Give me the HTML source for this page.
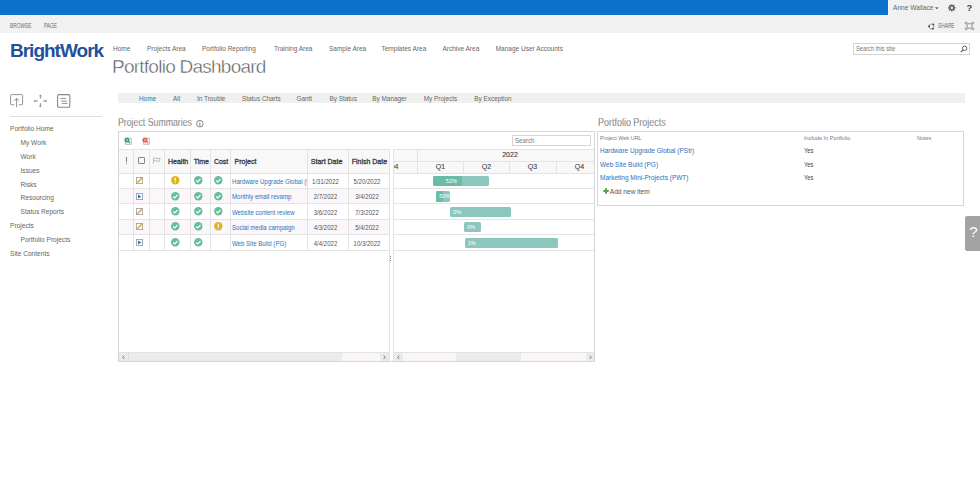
<!DOCTYPE html><html><head><meta charset="utf-8"><style>
html,body{margin:0;padding:0;width:980px;height:478px;overflow:hidden;background:#fff;font-family:"Liberation Sans",sans-serif;color:#444}
.a{position:absolute;white-space:nowrap}
.rt{font-size:6.5px;color:#6a6a6a;line-height:8px;transform:scaleX(0.74);transform-origin:0 0}
.nav{font-size:6.5px;color:#666;top:44.1px;line-height:10px}
.ln{font-size:6.6px;color:#666;line-height:10px}
.tab{font-size:6.4px;color:#666;top:93.7px;line-height:10px}
.vl{position:absolute;width:1px;background:#e3e3e3}
.hl{position:absolute;height:1px;background:#e3e3e3}
.hd{font-size:7px;font-weight:normal;-webkit-text-stroke:0.3px #3a3a3a;color:#3a3a3a;line-height:10px}
.cell{font-size:6.6px;line-height:10px;color:#555}
.sx{transform:scaleX(0.92);transform-origin:0 0}
.lnk{color:#2b72bb}
.gh{-webkit-text-stroke:0.12px #444;color:#444}
svg{position:absolute;overflow:visible}
</style></head><body>
<div class="a" style="left:0;top:0;width:888px;height:15px;background:#0a72ca"></div>
<div class="a" style="left:0;top:15px;width:980px;height:18px;background:#f2f1f2"></div>
<div class="a" style="left:888px;top:0;width:92px;height:15px;background:#f2f1f2"></div>
<div class="a rt" style="left:10px;top:21.5px">BROWSE</div>
<div class="a rt" style="left:44px;top:21.5px">PAGE</div>
<div class="a" id="anne" style="left:893px;top:2.5px;font-size:6.6px;line-height:10px;color:#666">Anne Wallace</div>
<svg style="left:935px;top:7px" width="4" height="3"><path d="M0 0.3H3.6L1.8 2.4Z" fill="#666"/></svg>
<svg style="left:947.6px;top:3.6px" width="8" height="8" viewBox="0 0 8 8"><path fill="#555" fill-rule="evenodd" d="M6.49 3.30L7.60 3.23L7.60 4.47L6.49 4.40L6.11 5.33L6.94 6.06L6.06 6.94L5.33 6.11L4.40 6.49L4.47 7.60L3.23 7.60L3.30 6.49L2.37 6.11L1.64 6.94L0.76 6.06L1.59 5.33L1.21 4.40L0.10 4.47L0.10 3.23L1.21 3.30L1.59 2.37L0.76 1.64L1.64 0.76L2.37 1.59L3.30 1.21L3.23 0.10L4.47 0.10L4.40 1.21L5.33 1.59L6.06 0.76L6.94 1.64L6.11 2.37ZM3.85 2.55a1.3 1.3 0 1 0 .001 0z"/></svg>
<div class="a" style="left:966.5px;top:2.4px;font-size:9.5px;font-weight:bold;line-height:12px;color:#444">?</div>
<svg style="left:927.9px;top:22.9px" width="7" height="7" viewBox="0 0 7 7"><circle cx="3.5" cy="3.5" r="2.5" fill="none" stroke="#8a8a8a" stroke-width="0.8"/><circle cx="1.0" cy="3.2" r="1.0" fill="#555"/><circle cx="5.3" cy="1.5" r="1.0" fill="#555"/><circle cx="4.9" cy="5.8" r="1.0" fill="#555"/></svg>
<div class="a rt" id="share" style="left:938px;top:21.5px">SHARE</div>
<svg style="left:965px;top:21.7px" width="9" height="8" viewBox="0 0 9 8"><rect x="2" y="1.8" width="5" height="4.4" fill="none" stroke="#777" stroke-width="0.8"/><path d="M0.4 2.2V0.4H2.2M6.8 0.4H8.6V2.2M8.6 5.8V7.6H6.8M2.2 7.6H0.4V5.8" fill="none" stroke="#777" stroke-width="0.8"/></svg>
<div class="a" id="logo" style="left:10px;top:39.9px;font-size:19px;font-weight:bold;color:#24509a;letter-spacing:-1px;line-height:22px">BrightWork</div>
<div class="a nav" style="left:113px">Home</div>
<div class="a nav" style="left:147px">Projects Area</div>
<div class="a nav" style="left:202px">Portfolio Reporting</div>
<div class="a nav" style="left:274px">Training Area</div>
<div class="a nav" style="left:329px">Sample Area</div>
<div class="a nav" style="left:381.5px">Templates Area</div>
<div class="a nav" style="left:442.4px">Archive Area</div>
<div class="a nav" style="left:495.7px">Manage User Accounts</div>
<div class="a" id="title" style="left:112px;top:56px;font-size:19px;letter-spacing:-0.75px;line-height:22px;color:#555;-webkit-text-stroke:0.45px #fff">Portfolio Dashboard</div>
<div class="a" style="left:853px;top:43px;width:117px;height:12px;box-sizing:border-box;border:1px solid #d4d4d4;background:#fff"></div>
<div class="a" id="sts" style="left:856px;top:44.3px;font-size:6.5px;line-height:10px;color:#777;transform:scaleX(0.88);transform-origin:0 0">Search this site</div>
<svg style="left:960px;top:45px" width="8" height="8" viewBox="0 0 8 8"><circle cx="4.6" cy="3.3" r="2.2" fill="none" stroke="#555" stroke-width="0.9"/><path d="M3 4.9L0.8 7.1" stroke="#555" stroke-width="1.1"/></svg>
<svg style="left:10px;top:94px" width="14" height="14" viewBox="0 0 14 14"><path d="M4.3 10.8H1.4a.8.8 0 0 1-.8-.8V1.4a.8.8 0 0 1 .8-.8h10.4a.8.8 0 0 1 .8.8V10a.8.8 0 0 1-.8.8H8.8" fill="none" stroke="#888" stroke-width="0.9"/><path d="M6.6 13.2V4.4M4.2 6.8L6.6 4.3 9 6.8" fill="none" stroke="#888" stroke-width="0.9"/></svg>
<svg style="left:33px;top:94px" width="15" height="15" viewBox="0 0 15 15"><g fill="#888"><path d="M7.4 0.4L5.9 2.2H8.9Z"/><path d="M7.4 13.4L5.9 11.6H8.9Z"/><path d="M0.6 7L2.4 5.5V8.5Z"/><path d="M14.2 7L12.4 5.5V8.5Z"/></g><path d="M7.4 2V4.6M7.4 9.2V11.8M2.2 7H4.8M10 7H12.6" stroke="#888" stroke-width="0.9"/></svg>
<svg style="left:57px;top:94px" width="14" height="14" viewBox="0 0 14 14"><rect x="0.6" y="0.6" width="12.2" height="12.6" rx="1" fill="none" stroke="#888" stroke-width="1.1"/><path d="M3.2 4.4H9M4 7.1H10M4.8 9.4H10.6" stroke="#888" stroke-width="0.9"/></svg>
<div class="a" style="left:10px;top:116px;width:92px;height:1px;background:#e0e0e0"></div>
<div class="a ln" style="left:10px;top:124.3px">Portfolio Home</div>
<div class="a ln" style="left:20.5px;top:138.2px">My Work</div>
<div class="a ln" style="left:20.5px;top:152.1px">Work</div>
<div class="a ln" style="left:20.5px;top:165.8px">Issues</div>
<div class="a ln" style="left:20.5px;top:179.6px">Risks</div>
<div class="a ln" style="left:20.5px;top:193.4px">Resourcing</div>
<div class="a ln" style="left:20.5px;top:207.3px">Status Reports</div>
<div class="a ln" style="left:10px;top:221.1px">Projects</div>
<div class="a ln" style="left:20.5px;top:235px">Portfolio Projects</div>
<div class="a ln" style="left:10px;top:248.6px">Site Contents</div>
<div class="a" style="left:118px;top:93px;width:847px;height:10px;background:#f0f0f0"></div>
<div class="a tab lnk" style="left:139px">Home</div>
<div class="a tab" style="left:173px">All</div>
<div class="a tab" style="left:197px">In Trouble</div>
<div class="a tab" style="left:242px">Status Charts</div>
<div class="a tab" style="left:296.5px">Gantt</div>
<div class="a tab" style="left:329.5px">By Status</div>
<div class="a tab" style="left:372.3px">By Manager</div>
<div class="a tab" style="left:423.8px">My Projects</div>
<div class="a tab" style="left:474.3px">By Exception</div>
<div class="a" id="ps" style="left:118px;top:116px;font-size:10.3px;line-height:14px;color:#444;-webkit-text-stroke:0.25px #fff;transform:scaleX(0.85);transform-origin:0 0">Project Summaries</div>
<svg style="left:196px;top:120px" width="8" height="8" viewBox="0 0 8 8"><circle cx="3.9" cy="3.7" r="3.3" fill="none" stroke="#666" stroke-width="0.8"/><path d="M3.9 3V5.8" stroke="#666" stroke-width="0.9"/><circle cx="3.9" cy="1.9" r="0.5" fill="#666"/></svg>
<div class="a" id="pp" style="left:597.5px;top:115.8px;font-size:10.3px;line-height:14px;color:#444;-webkit-text-stroke:0.25px #fff;transform:scaleX(0.87);transform-origin:0 0">Portfolio Projects</div>
<div class="a" style="left:118px;top:131px;width:477px;height:231px;box-sizing:border-box;border:1px solid #d6d6d6"></div>
<svg style="left:124px;top:136.6px" width="9" height="9" viewBox="0 0 9 9"><path d="M5.2 1.1H7.3V7.3H1.4V5.2" fill="none" stroke="#a8a8a8" stroke-width="0.8"/><circle cx="3" cy="3" r="2.6" fill="#3a9a86"/><rect x="2.2" y="2.4" width="1.6" height="1.2" fill="#d8efe8"/><path d="M4.6 4.6L6.2 6.2" stroke="#3a9a86" stroke-width="1.1"/></svg>
<svg style="left:141.9px;top:136.6px" width="9" height="9" viewBox="0 0 9 9"><path d="M5.2 1.1H7.3V7.3H1.4V5.2" fill="none" stroke="#a8a8a8" stroke-width="0.8"/><circle cx="3" cy="3" r="2.6" fill="#e5604c"/><rect x="2.2" y="2.4" width="1.6" height="1.2" fill="#fde3dc"/><path d="M4.6 4.6L6.2 6.2" stroke="#e5604c" stroke-width="1.1"/></svg>
<div class="a" style="left:512px;top:135px;width:79px;height:11px;box-sizing:border-box;border:1px solid #d6d6d6"></div>
<div class="a" style="left:514.8px;top:136px;font-size:7px;line-height:10px;color:#777;transform:scaleX(0.88);transform-origin:0 0">Search</div>
<div class="a" style="left:119px;top:149px;width:270px;height:24px;background:#f9f8f9"></div>
<div class="a" style="left:394px;top:149px;width:200px;height:24px;background:#f9f8f9"></div>
<div class="a" style="left:119px;top:188px;width:270px;height:15px;background:#faf6fa"></div>
<div class="a" style="left:119px;top:219px;width:270px;height:15px;background:#faf6fa"></div>
<div class="hl" style="left:119px;top:149px;width:270px"></div>
<div class="hl" style="left:394px;top:149px;width:200px"></div>
<div class="hl" style="left:119px;top:173px;width:270px"></div>
<div class="hl" style="left:394px;top:173px;width:200px"></div>
<div class="hl" style="left:119px;top:188px;width:270px"></div>
<div class="hl" style="left:394px;top:188px;width:200px"></div>
<div class="hl" style="left:119px;top:203px;width:270px"></div>
<div class="hl" style="left:394px;top:203px;width:200px"></div>
<div class="hl" style="left:119px;top:219px;width:270px"></div>
<div class="hl" style="left:394px;top:219px;width:200px"></div>
<div class="hl" style="left:119px;top:234px;width:270px"></div>
<div class="hl" style="left:394px;top:234px;width:200px"></div>
<div class="hl" style="left:119px;top:250px;width:270px"></div>
<div class="hl" style="left:394px;top:250px;width:200px"></div>
<div class="hl" style="left:394px;top:161px;width:200px"></div>
<div class="vl" style="left:133px;top:149px;height:101px"></div>
<div class="vl" style="left:149px;top:149px;height:101px"></div>
<div class="vl" style="left:164px;top:149px;height:101px"></div>
<div class="vl" style="left:190px;top:149px;height:101px"></div>
<div class="vl" style="left:210px;top:149px;height:101px"></div>
<div class="vl" style="left:230px;top:149px;height:101px"></div>
<div class="vl" style="left:307px;top:149px;height:101px"></div>
<div class="vl" style="left:348px;top:149px;height:101px"></div>
<div class="vl" style="left:389px;top:149px;height:212px"></div>
<div class="vl" style="left:393px;top:149px;height:212px"></div>
<div class="a" style="left:390px;top:256px;width:1px;height:6px;background:repeating-linear-gradient(#888 0 1px,transparent 1px 2.2px)"></div>
<div class="vl" style="left:417px;top:149px;height:24px"></div>
<div class="vl" style="left:463px;top:161px;height:12px"></div>
<div class="vl" style="left:509px;top:161px;height:12px"></div>
<div class="vl" style="left:556px;top:161px;height:12px"></div>
<div class="hl" style="left:119px;top:352px;width:270px;background:#e2e2e2"></div>
<div class="hl" style="left:394px;top:352px;width:200px;background:#e2e2e2"></div>
<div class="a" style="left:119px;top:353px;width:270px;height:8px;background:#ebebeb"></div>
<div class="a" style="left:342px;top:353px;width:38px;height:8px;background:#f9f5f9"></div>
<div class="a" style="left:394px;top:353px;width:200px;height:8px;background:#ebebeb"></div>
<div class="a" style="left:403px;top:353px;width:53px;height:8px;background:#f9f5f9"></div>
<div class="a" style="left:521px;top:353px;width:65px;height:8px;background:#f9f5f9"></div>
<div class="vl" style="left:128px;top:353px;height:8px;background:#dcdcdc"></div>
<svg style="left:121.8px;top:354.5px" width="3" height="5" viewBox="0 0 3 5"><path d="M2.4 0.6L0.7 2.3 2.4 4" fill="none" stroke="#666" stroke-width="0.9"/></svg>
<svg style="left:383px;top:354.5px" width="3" height="5" viewBox="0 0 3 5"><path d="M0.6 0.6L2.3 2.3 0.6 4" fill="none" stroke="#666" stroke-width="0.9"/></svg>
<svg style="left:396.5px;top:354.5px" width="3" height="5" viewBox="0 0 3 5"><path d="M2.4 0.6L0.7 2.3 2.4 4" fill="none" stroke="#666" stroke-width="0.9"/></svg>
<svg style="left:588.5px;top:354.5px" width="3" height="5" viewBox="0 0 3 5"><path d="M0.6 0.6L2.3 2.3 0.6 4" fill="none" stroke="#666" stroke-width="0.9"/></svg>
<div class="a" style="left:125.5px;top:157px;width:1.4px;height:4.8px;background:#808080"></div>
<div class="a" style="left:125.5px;top:162.6px;width:1.4px;height:1.2px;background:#808080"></div>
<div class="a" style="left:138px;top:157px;width:7px;height:6.7px;box-sizing:border-box;border:1px solid #8a8a8a;border-radius:1px"></div>
<svg style="left:153px;top:157px" width="8" height="7" viewBox="0 0 8 7"><path d="M0.5 6.5V1.2Q2 0.4 3.6 1.2T6.8 1.2V4Q5.2 4.8 3.6 4T0.5 4" fill="none" stroke="#aaa" stroke-width="0.8"/></svg>
<div class="a hd" style="left:168px;top:156.5px">Health</div>
<div class="a hd" style="left:193.7px;top:156.5px">Time</div>
<div class="a hd" style="left:213.9px;top:156.5px">Cost</div>
<div class="a hd" style="left:234.6px;top:156.5px">Project</div>
<div class="a hd" style="left:310.8px;top:156.5px">Start Date</div>
<div class="a hd" style="left:351.7px;top:156.5px">Finish Date</div>
<div class="a hd gh" style="left:393.5px;top:162px;width:5px;overflow:hidden;direction:rtl">Q4</div>
<div class="a hd gh" style="left:490px;top:150.3px;width:40px;text-align:center">2022</div>
<div class="a hd gh" style="left:417.4px;top:162.2px;width:46px;text-align:center">Q1</div>
<div class="a hd gh" style="left:463.4px;top:162.2px;width:46px;text-align:center">Q2</div>
<div class="a hd gh" style="left:509.4px;top:162.2px;width:46px;text-align:center">Q3</div>
<div class="a hd gh" style="left:556.4px;top:162.2px;width:46px;text-align:center">Q4</div>
<svg style="left:136px;top:177.4px" width="7" height="7" viewBox="0 0 7 7"><rect x="0.4" y="0.4" width="6.2" height="6.2" fill="#fff" stroke="#999" stroke-width="0.8"/><path d="M1.3 5.7L5.8 1.2" stroke="#e9a620" stroke-width="1.6"/></svg>
<svg style="left:170.7px;top:176.2px" width="9" height="9" viewBox="0 0 9 9"><circle cx="4.3" cy="4.3" r="4.2" fill="#e1b31f"/><path d="M4.3 1.8V4.9" stroke="#fff" stroke-width="1.1"/><circle cx="4.3" cy="6.3" r="0.6" fill="#fff"/></svg>
<svg style="left:193.7px;top:176.2px" width="9" height="9" viewBox="0 0 9 9"><circle cx="4.3" cy="4.3" r="4.2" fill="#68bd9b"/><path d="M2.2 4.5L3.7 5.9 6.5 3" fill="none" stroke="#fff" stroke-width="1.1"/></svg>
<svg style="left:214.1px;top:176.2px" width="9" height="9" viewBox="0 0 9 9"><circle cx="4.3" cy="4.3" r="4.2" fill="#68bd9b"/><path d="M2.2 4.5L3.7 5.9 6.5 3" fill="none" stroke="#fff" stroke-width="1.1"/></svg>
<div class="a" style="left:231.6px;top:177.10px;width:75.4px;height:10px;overflow:hidden"><div class="cell lnk sx">Hardware Upgrade Global (PStr)</div></div>
<div class="a cell" style="left:307px;top:177.10px;width:37px;text-align:center;transform:scaleX(0.92)">1/31/2022</div>
<div class="a cell" style="left:348.8px;top:177.10px;width:36px;text-align:center;transform:scaleX(0.92)">5/20/2022</div>
<svg style="left:136px;top:192.70000000000002px" width="7" height="7" viewBox="0 0 7 7"><rect x="0.4" y="0.4" width="6.2" height="6.2" fill="#fff" stroke="#999" stroke-width="0.8"/><path d="M2 1.5L5.4 3.5 2 5.5Z" fill="#1e78d4"/></svg>
<svg style="left:170.7px;top:191.5px" width="9" height="9" viewBox="0 0 9 9"><circle cx="4.3" cy="4.3" r="4.2" fill="#68bd9b"/><path d="M2.2 4.5L3.7 5.9 6.5 3" fill="none" stroke="#fff" stroke-width="1.1"/></svg>
<svg style="left:193.7px;top:191.5px" width="9" height="9" viewBox="0 0 9 9"><circle cx="4.3" cy="4.3" r="4.2" fill="#68bd9b"/><path d="M2.2 4.5L3.7 5.9 6.5 3" fill="none" stroke="#fff" stroke-width="1.1"/></svg>
<svg style="left:214.1px;top:191.5px" width="9" height="9" viewBox="0 0 9 9"><circle cx="4.3" cy="4.3" r="4.2" fill="#68bd9b"/><path d="M2.2 4.5L3.7 5.9 6.5 3" fill="none" stroke="#fff" stroke-width="1.1"/></svg>
<div class="a" style="left:231.6px;top:192.40px;width:75.4px;height:10px;overflow:hidden"><div class="cell lnk sx">Monthly email revamp</div></div>
<div class="a cell" style="left:307px;top:192.40px;width:37px;text-align:center;transform:scaleX(0.92)">2/7/2022</div>
<div class="a cell" style="left:348.8px;top:192.40px;width:36px;text-align:center;transform:scaleX(0.92)">3/4/2022</div>
<svg style="left:136px;top:208.10000000000002px" width="7" height="7" viewBox="0 0 7 7"><rect x="0.4" y="0.4" width="6.2" height="6.2" fill="#fff" stroke="#999" stroke-width="0.8"/><path d="M1.3 5.7L5.8 1.2" stroke="#e9a620" stroke-width="1.6"/></svg>
<svg style="left:170.7px;top:206.9px" width="9" height="9" viewBox="0 0 9 9"><circle cx="4.3" cy="4.3" r="4.2" fill="#68bd9b"/><path d="M2.2 4.5L3.7 5.9 6.5 3" fill="none" stroke="#fff" stroke-width="1.1"/></svg>
<svg style="left:193.7px;top:206.9px" width="9" height="9" viewBox="0 0 9 9"><circle cx="4.3" cy="4.3" r="4.2" fill="#68bd9b"/><path d="M2.2 4.5L3.7 5.9 6.5 3" fill="none" stroke="#fff" stroke-width="1.1"/></svg>
<svg style="left:214.1px;top:206.9px" width="9" height="9" viewBox="0 0 9 9"><circle cx="4.3" cy="4.3" r="4.2" fill="#68bd9b"/><path d="M2.2 4.5L3.7 5.9 6.5 3" fill="none" stroke="#fff" stroke-width="1.1"/></svg>
<div class="a" style="left:231.6px;top:207.80px;width:75.4px;height:10px;overflow:hidden"><div class="cell lnk sx">Website content review</div></div>
<div class="a cell" style="left:307px;top:207.80px;width:37px;text-align:center;transform:scaleX(0.92)">3/6/2022</div>
<div class="a cell" style="left:348.8px;top:207.80px;width:36px;text-align:center;transform:scaleX(0.92)">7/3/2022</div>
<svg style="left:136px;top:223.4px" width="7" height="7" viewBox="0 0 7 7"><rect x="0.4" y="0.4" width="6.2" height="6.2" fill="#fff" stroke="#999" stroke-width="0.8"/><path d="M1.3 5.7L5.8 1.2" stroke="#e9a620" stroke-width="1.6"/></svg>
<svg style="left:170.7px;top:222.2px" width="9" height="9" viewBox="0 0 9 9"><circle cx="4.3" cy="4.3" r="4.2" fill="#68bd9b"/><path d="M2.2 4.5L3.7 5.9 6.5 3" fill="none" stroke="#fff" stroke-width="1.1"/></svg>
<svg style="left:193.7px;top:222.2px" width="9" height="9" viewBox="0 0 9 9"><circle cx="4.3" cy="4.3" r="4.2" fill="#68bd9b"/><path d="M2.2 4.5L3.7 5.9 6.5 3" fill="none" stroke="#fff" stroke-width="1.1"/></svg>
<svg style="left:214.1px;top:222.2px" width="9" height="9" viewBox="0 0 9 9"><circle cx="4.3" cy="4.3" r="4.2" fill="#e1b31f"/><path d="M4.3 1.8V4.9" stroke="#fff" stroke-width="1.1"/><circle cx="4.3" cy="6.3" r="0.6" fill="#fff"/></svg>
<div class="a" style="left:231.6px;top:223.10px;width:75.4px;height:10px;overflow:hidden"><div class="cell lnk sx">Social media campaign</div></div>
<div class="a cell" style="left:307px;top:223.10px;width:37px;text-align:center;transform:scaleX(0.92)">4/3/2022</div>
<div class="a cell" style="left:348.8px;top:223.10px;width:36px;text-align:center;transform:scaleX(0.92)">5/4/2022</div>
<svg style="left:136px;top:238.8px" width="7" height="7" viewBox="0 0 7 7"><rect x="0.4" y="0.4" width="6.2" height="6.2" fill="#fff" stroke="#999" stroke-width="0.8"/><path d="M2 1.5L5.4 3.5 2 5.5Z" fill="#1e78d4"/></svg>
<svg style="left:170.7px;top:237.6px" width="9" height="9" viewBox="0 0 9 9"><circle cx="4.3" cy="4.3" r="4.2" fill="#68bd9b"/><path d="M2.2 4.5L3.7 5.9 6.5 3" fill="none" stroke="#fff" stroke-width="1.1"/></svg>
<svg style="left:193.7px;top:237.6px" width="9" height="9" viewBox="0 0 9 9"><circle cx="4.3" cy="4.3" r="4.2" fill="#68bd9b"/><path d="M2.2 4.5L3.7 5.9 6.5 3" fill="none" stroke="#fff" stroke-width="1.1"/></svg>
<div class="a" style="left:231.6px;top:238.50px;width:75.4px;height:10px;overflow:hidden"><div class="cell lnk sx">Web Site Build (PG)</div></div>
<div class="a cell" style="left:307px;top:238.50px;width:37px;text-align:center;transform:scaleX(0.92)">4/4/2022</div>
<div class="a cell" style="left:348.8px;top:238.50px;width:36px;text-align:center;transform:scaleX(0.92)">10/3/2022</div>
<div class="a" style="left:432.8px;top:176.10px;width:55.8px;height:10.2px;background:#8cc7bf;border-radius:1.5px;overflow:hidden"><div style="position:absolute;left:0;top:0;width:29.2px;height:100%;background:#69bca8"></div><div style="position:absolute;left:13px;top:1px;font-size:5.6px;line-height:9.6px;color:#fff">52%</div></div>
<div class="a" style="left:436.3px;top:191.40px;width:13.3px;height:10.2px;background:#8cc7bf;border-radius:1.5px;overflow:hidden"><div style="position:absolute;left:0;top:0;width:6.7px;height:100%;background:#69bca8"></div><div style="position:absolute;left:3px;top:1px;font-size:5.6px;line-height:9.6px;color:#fff">50%</div></div>
<div class="a" style="left:450.1px;top:206.80px;width:61.4px;height:10.2px;background:#8cc7bf;border-radius:1.5px;overflow:hidden"><div style="position:absolute;left:3px;top:1px;font-size:5.6px;line-height:9.6px;color:#fff">0%</div></div>
<div class="a" style="left:464.2px;top:222.10px;width:16.8px;height:10.2px;background:#8cc7bf;border-radius:1.5px;overflow:hidden"><div style="position:absolute;left:3px;top:1px;font-size:5.6px;line-height:9.6px;color:#fff">0%</div></div>
<div class="a" style="left:464.7px;top:237.50px;width:93.6px;height:10.2px;background:#8cc7bf;border-radius:1.5px;overflow:hidden"><div style="position:absolute;left:3px;top:1px;font-size:5.6px;line-height:9.6px;color:#fff">1%</div></div>
<div class="a" style="left:597px;top:130.5px;width:367px;height:75px;box-sizing:border-box;border:1px solid #d6d6d6"></div>
<div class="a" id="pwu" style="left:600px;top:133.6px;font-size:5.4px;line-height:9px;color:#777">Project Web URL</div>
<div class="a" style="left:804px;top:133.6px;font-size:5.6px;line-height:9px;color:#777">Include In Portfolio</div>
<div class="a" style="left:917px;top:133.6px;font-size:5.4px;line-height:9px;color:#777">Notes</div>
<div class="a lnk pl" style="left:600px;top:146.4px;font-size:6.5px;line-height:10px">Hardware Upgrade Global (PStr)</div>
<div class="a" style="left:804px;top:146.4px;font-size:6.8px;line-height:10px;color:#444;transform:scaleX(0.85);transform-origin:0 0">Yes</div>
<div class="a lnk pl" style="left:600px;top:159.5px;font-size:6.5px;line-height:10px">Web Site Build (PG)</div>
<div class="a" style="left:804px;top:159.5px;font-size:6.8px;line-height:10px;color:#444;transform:scaleX(0.85);transform-origin:0 0">Yes</div>
<div class="a lnk pl" style="left:600px;top:172.7px;font-size:6.5px;line-height:10px">Marketing Mini-Projects (PWT)</div>
<div class="a" style="left:804px;top:172.7px;font-size:6.8px;line-height:10px;color:#444;transform:scaleX(0.85);transform-origin:0 0">Yes</div>
<svg style="left:602.6px;top:188px" width="6" height="6" viewBox="0 0 6 6"><path d="M3 1V5M1 3H5" stroke="#4aab45" stroke-width="2" stroke-linecap="round"/></svg>
<div class="a" id="ani" style="left:609.8px;top:186.9px;font-size:6.6px;line-height:10px;color:#555">Add new item</div>
<div class="a" style="left:965px;top:216px;width:15px;height:35px;background:#a3a3a3;border-radius:2px 0 0 2px"></div>
<div class="a" style="left:969.3px;top:224.5px;font-size:15px;line-height:14px;color:#fff">?</div>
</body></html>
